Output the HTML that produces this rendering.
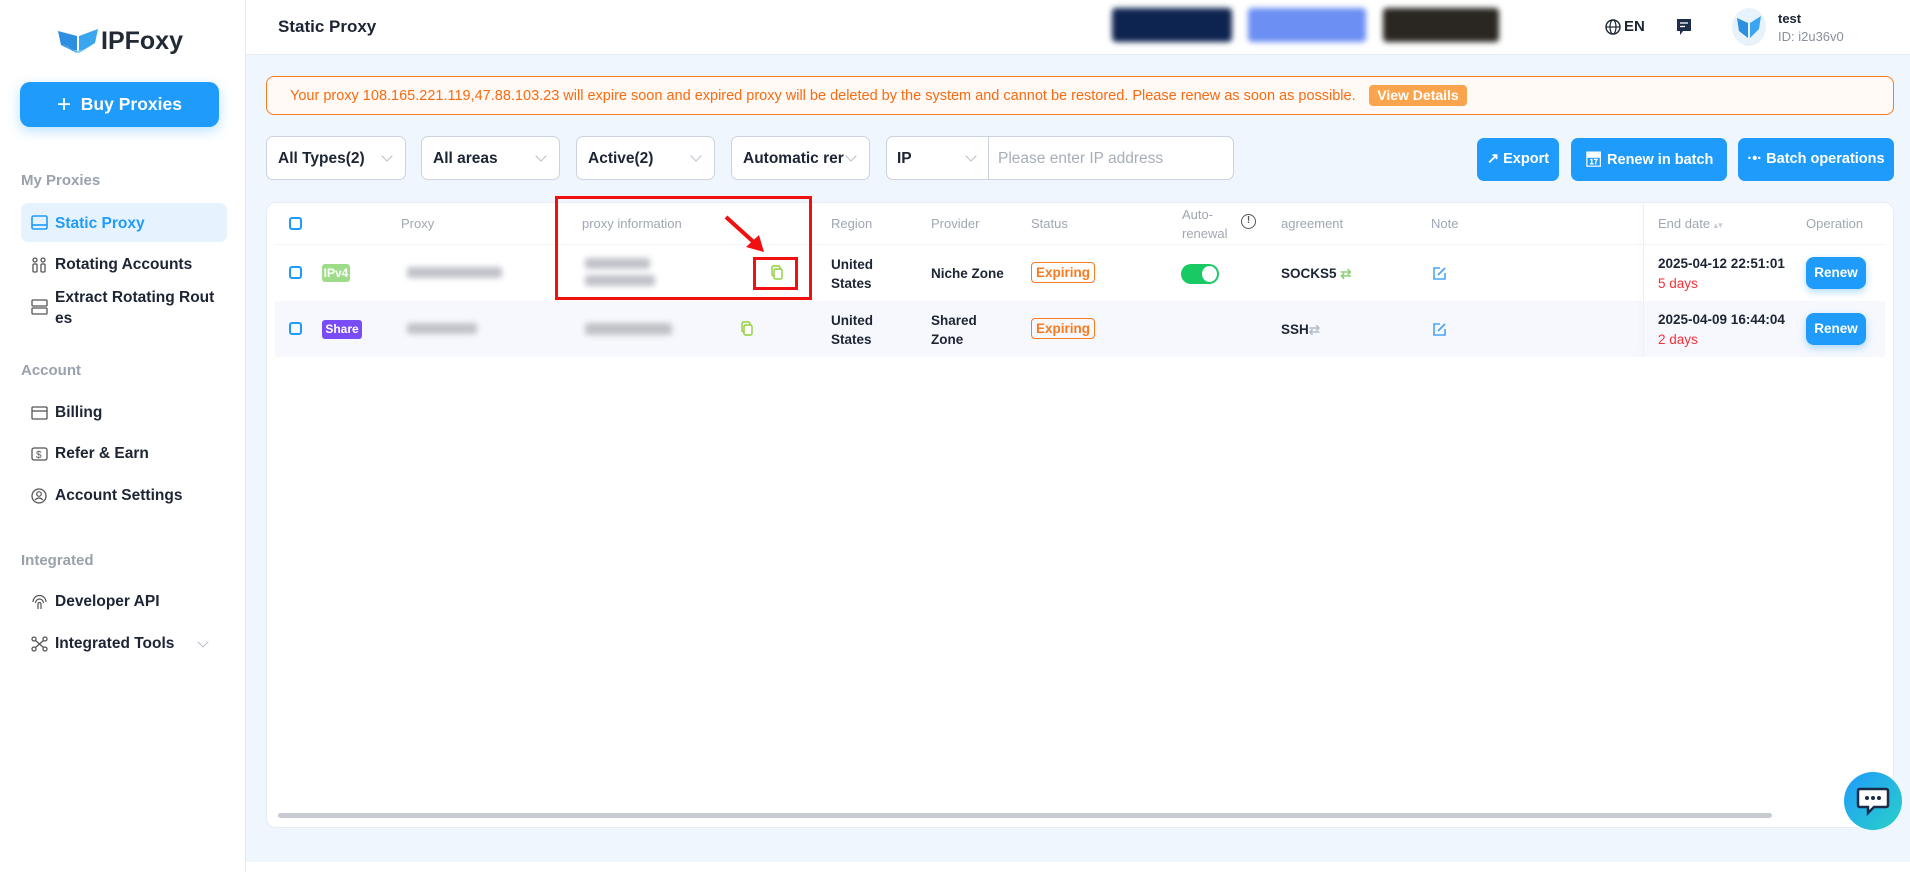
<!DOCTYPE html>
<html><head><meta charset="utf-8"><style>
*{box-sizing:border-box;margin:0;padding:0}
body{width:1910px;height:872px;overflow:hidden;background:#f0f6fe;font-family:"Liberation Sans",sans-serif;color:#1d2433;position:relative}
.a{position:absolute}
.side{left:0;top:0;width:246px;height:872px;background:#fff;border-right:1px solid #e6eaf0}
.nav{position:absolute;left:55px;font-size:15.5px;font-weight:bold;color:#1d2433}
.ico{position:absolute;left:31px}
.sec{position:absolute;left:21px;font-size:15px;font-weight:bold;color:#9aa1ac}
.hdr{left:246px;top:0;width:1664px;height:55px;background:#fff;border-bottom:1px solid #e8edf3}
.sel{position:absolute;top:136px;height:44px;background:#fff;border:1px solid #cdd3dc;border-radius:7px;font-size:15.5px;font-weight:bold;padding:13px 0 0 11px}
.sel:after{content:"";position:absolute;right:14px;top:15px;width:7px;height:7px;border-right:1.5px solid #b8bec8;border-bottom:1.5px solid #b8bec8;transform:rotate(45deg)}
.btn{position:absolute;top:138px;height:43px;background:#1f9bfb;border-radius:7px;color:#fff;font-size:14.5px;font-weight:bold;padding:13px 0 0 0;text-align:center}
.th{position:absolute;top:216px;font-size:13px;color:#a0a7b2}
.td{position:absolute;font-size:13.5px;font-weight:bold;color:#1d2433;line-height:19px}
.cb{position:absolute;left:289px;width:13px;height:13px;border:2px solid #1f9bfb;border-radius:3px}
.blur{position:absolute;background:#bfc2c8;filter:blur(3px);border-radius:3px}
.exp{position:absolute;left:1031px;border:1.5px solid #fa7a1e;color:#fa7a1e;border-radius:4px;font-size:13.5px;font-weight:bold;padding:2px 4px}
.renew{position:absolute;left:1806px;width:60px;height:32px;background:#1f9bfb;border-radius:8px;color:#fff;font-weight:bold;font-size:13.5px;text-align:center;line-height:32px;box-shadow:0 3px 8px rgba(31,155,251,.35)}
</style></head><body>

<div class="a side">
  <svg class="a" style="left:57px;top:27px" width="42" height="28" viewBox="0 0 42 28"><path d="M1 4 L20 9 L20 26 L4 18Z" fill="#2c8fe0"/><path d="M41 2 L22 9 L22 26 L38 16Z" fill="#3aa6f0"/><path d="M6 17 Q21 30 36 17 L21 26Z" fill="#7dd0f4"/></svg>
  <div class="a" style="left:101px;top:27px;font-size:25px;font-weight:bold;color:#222a35">IPFoxy</div>
  <div class="a" style="left:20px;top:82px;width:199px;height:45px;background:#1f9bfb;border-radius:10px;color:#fff;font-size:17.5px;font-weight:bold;text-align:center;line-height:45px;box-shadow:0 4px 12px rgba(31,155,251,.3)"><span style="font-size:24px;font-weight:normal;vertical-align:-2px">+</span>&nbsp; Buy Proxies</div>
  <div class="sec" style="top:172px">My Proxies</div>
  <div class="a" style="left:21px;top:203px;width:206px;height:39px;background:#e6f3fe;border-radius:7px"></div>
  <svg class="ico" style="top:215px" width="17" height="15"><rect x="1" y="1" width="15" height="13" rx="1.5" fill="none" stroke="#1f9bfb" stroke-width="1.6"/><line x1="1" y1="10" x2="16" y2="10" stroke="#1f9bfb" stroke-width="1.6"/></svg>
  <div class="nav" style="top:215px;color:#1f9bfb">Static Proxy</div>
  <svg class="ico" style="top:257px" width="16" height="16"><circle cx="4" cy="3" r="2" fill="none" stroke="#555" stroke-width="1.3"/><circle cx="12" cy="3" r="2" fill="none" stroke="#555" stroke-width="1.3"/><rect x="2" y="7" width="4" height="8" rx="1" fill="none" stroke="#555" stroke-width="1.3"/><rect x="10" y="7" width="4" height="8" rx="1" fill="none" stroke="#555" stroke-width="1.3"/></svg>
  <div class="nav" style="top:256px">Rotating Accounts</div>
  <svg class="ico" style="top:299px" width="17" height="16"><rect x="1" y="1" width="15" height="6" rx="1" fill="none" stroke="#555" stroke-width="1.3"/><rect x="1" y="9" width="15" height="6" rx="1" fill="none" stroke="#555" stroke-width="1.3"/></svg>
  <div class="nav" style="top:287px;line-height:21px">Extract Rotating Rout<br>es</div>
  <div class="sec" style="top:362px">Account</div>
  <svg class="ico" style="top:406px" width="17" height="14"><rect x="1" y="1" width="15" height="12" rx="1" fill="none" stroke="#555" stroke-width="1.3"/><line x1="1" y1="5" x2="16" y2="5" stroke="#555" stroke-width="1.3"/></svg>
  <div class="nav" style="top:404px">Billing</div>
  <svg class="ico" style="top:447px" width="17" height="14"><rect x="1" y="1" width="15" height="12" rx="2" fill="none" stroke="#555" stroke-width="1.3"/><text x="5" y="11" font-size="10" fill="#555" font-family="Liberation Sans">$</text></svg>
  <div class="nav" style="top:445px">Refer &amp; Earn</div>
  <svg class="ico" style="top:488px" width="16" height="16"><circle cx="8" cy="8" r="7" fill="none" stroke="#555" stroke-width="1.3"/><circle cx="8" cy="6" r="2.3" fill="none" stroke="#555" stroke-width="1.2"/><path d="M4 12 Q8 8 12 12" fill="none" stroke="#555" stroke-width="1.2"/></svg>
  <div class="nav" style="top:487px">Account Settings</div>
  <div class="sec" style="top:552px">Integrated</div>
  <svg class="ico" style="top:594px" width="17" height="16"><path d="M2 8 A6.5 6.5 0 0 1 15 8 M4.5 9 A4 4 0 0 1 12.5 9 M7 15 V10 A1.5 1.5 0 0 1 10 10 V15" fill="none" stroke="#555" stroke-width="1.2"/></svg>
  <div class="nav" style="top:593px">Developer API</div>
  <svg class="ico" style="top:636px" width="17" height="16"><circle cx="3" cy="3" r="2" fill="none" stroke="#555" stroke-width="1.3"/><circle cx="14" cy="3" r="2" fill="none" stroke="#555" stroke-width="1.3"/><circle cx="3" cy="13" r="2" fill="none" stroke="#555" stroke-width="1.3"/><circle cx="14" cy="13" r="2" fill="none" stroke="#555" stroke-width="1.3"/><path d="M4.5 4.5 L12.5 11.5 M12.5 4.5 L4.5 11.5" stroke="#555" stroke-width="1.3"/></svg>
  <div class="nav" style="top:635px">Integrated Tools</div>
  <div class="a" style="left:199px;top:638px;width:8px;height:8px;border-right:1.5px solid #b8bec8;border-bottom:1.5px solid #b8bec8;transform:rotate(45deg)"></div>
</div>

<div class="a hdr">
  <div class="a" style="left:32px;top:17px;font-size:17px;font-weight:bold">Static Proxy</div>
  <div class="a" style="left:866px;top:8px;width:120px;height:34px;background:#0e2450;filter:blur(3px);border-radius:4px"></div>
  <div class="a" style="left:1002px;top:8px;width:118px;height:34px;background:#6b8ff3;filter:blur(3px);border-radius:4px"></div>
  <div class="a" style="left:1137px;top:8px;width:116px;height:34px;background:#2a2622;filter:blur(3px);border-radius:4px"></div>
  <svg class="a" style="left:1359px;top:19px" width="16" height="16"><circle cx="8" cy="8" r="7" fill="none" stroke="#1d2433" stroke-width="1.4"/><ellipse cx="8" cy="8" rx="3" ry="7" fill="none" stroke="#1d2433" stroke-width="1.2"/><line x1="1" y1="8" x2="15" y2="8" stroke="#1d2433" stroke-width="1.2"/></svg>
  <div class="a" style="left:1378px;top:18px;font-size:15px;font-weight:bold">EN</div>
  <svg class="a" style="left:1430px;top:18px" width="16" height="18"><path d="M1 1 H15 V13 H7 L4 17 V13 H1Z" fill="#1d2e4a"/><line x1="4" y1="5" x2="12" y2="5" stroke="#fff" stroke-width="1.3"/><line x1="4" y1="8.5" x2="9" y2="8.5" stroke="#fff" stroke-width="1.3"/></svg>
  <div class="a" style="left:1486px;top:8px;width:34px;height:38px;border-radius:50%;background:#e8f2fb"></div>
  <svg class="a" style="left:1490px;top:14px" width="26" height="28"><path d="M1 4 L12 9 L12 24 L3 17Z" fill="#2c8fe0"/><path d="M25 2 L14 9 L14 24 L23 15Z" fill="#3aa6f0"/></svg>
  <div class="a" style="left:1532px;top:11px;font-size:13px;font-weight:bold">test</div>
  <div class="a" style="left:1532px;top:29px;font-size:13px;color:#8a919c">ID: i2u36v0</div>
</div>

<div class="a" style="left:266px;top:76px;width:1628px;height:39px;background:#fffaf6;border:1.5px solid #fa7a1e;border-radius:8px"></div>
<div class="a" style="left:290px;top:88px;font-size:14.5px;color:#fa6a10">Your proxy 108.165.221.119,47.88.103.23 will expire soon and expired proxy will be deleted by the system and cannot be restored. Please renew as soon as possible.</div>
<div class="a" style="left:1369px;top:85px;width:98px;height:21px;background:#fba44e;border-radius:4px;color:#fff;font-size:14px;font-weight:bold;text-align:center;line-height:21px">View Details</div>

<div class="sel" style="left:266px;width:140px">All Types(2)</div>
<div class="sel" style="left:421px;width:139px">All areas</div>
<div class="sel" style="left:576px;width:139px">Active(2)</div>
<div class="sel" style="left:731px;width:139px">Automatic rer</div>
<div class="a" style="left:886px;top:136px;width:348px;height:44px;background:#fff;border:1px solid #cdd3dc;border-radius:7px"></div>
<div class="sel" style="left:886px;width:103px;border:none;background:transparent;top:137px">IP</div>
<div class="a" style="left:988px;top:137px;width:1px;height:42px;background:#cdd3dc"></div>
<div class="a" style="left:998px;top:150px;font-size:15.5px;color:#a8aeb8">Please enter IP address</div>

<div class="btn" style="left:1477px;width:82px">&#x2197; Export</div>
<div class="btn" style="left:1571px;width:156px">&#x1F4C5;&#xFE0E; Renew in batch</div>
<div class="btn" style="left:1738px;width:156px">·•· Batch operations</div>

<div class="a" style="left:266px;top:202px;width:1628px;height:626px;background:#fff;border-radius:10px;border:1px solid #e8edf3"></div>
<div class="a" style="left:275px;top:244px;width:1610px;height:1px;background:#f0f3f8"></div>
<div class="a" style="left:275px;top:301px;width:1610px;height:56px;background:#f6f8fd"></div>
<div class="a" style="left:1643px;top:203px;width:1px;height:154px;background:#eceff4;box-shadow:-3px 0 6px rgba(0,0,0,.06)"></div>

<div class="cb" style="top:217px"></div>
<div class="th" style="left:401px">Proxy</div>
<div class="th" style="left:582px">proxy information</div>
<div class="th" style="left:831px">Region</div>
<div class="th" style="left:931px">Provider</div>
<div class="th" style="left:1031px">Status</div>
<div class="th" style="left:1182px;top:205px;line-height:19px">Auto-<br>renewal</div>
<div class="a" style="left:1241px;top:214px;width:15px;height:15px;border:1.5px solid #555;border-radius:50%;font-size:10px;font-weight:bold;text-align:center;line-height:12px;color:#555">!</div>
<div class="th" style="left:1281px">agreement</div>
<div class="th" style="left:1431px">Note</div>
<div class="th" style="left:1658px">End date <span style="font-size:9px;color:#c8cdd4">&#x25B4;&#x25BE;</span></div>
<div class="th" style="left:1806px">Operation</div>

<div class="cb" style="top:266px"></div>
<div class="a" style="left:322px;top:264px;width:28px;height:18px;background:#9edc8a;border-radius:3px;color:#fff;font-size:12px;font-weight:bold;text-align:center;line-height:18px">IPv4</div>
<div class="blur" style="left:407px;top:267px;width:95px;height:11px"></div>
<div class="blur" style="left:585px;top:258px;width:65px;height:11px"></div>
<div class="blur" style="left:585px;top:275px;width:70px;height:11px"></div>
<svg class="a" style="left:771px;top:265px" width="12" height="15"><rect x="1" y="1" width="8" height="10" rx="1.5" fill="none" stroke="#8fd03a" stroke-width="1.4"/><rect x="3" y="4" width="8" height="10" rx="1.5" fill="#fff" stroke="#8fd03a" stroke-width="1.4"/></svg>
<div class="td" style="left:831px;top:255px">United<br>States</div>
<div class="td" style="left:931px;top:264px">Niche Zone</div>
<div class="exp" style="top:262px">Expiring</div>
<div class="a" style="left:1181px;top:264px;width:38px;height:20px;background:#18c964;border-radius:10px"></div>
<div class="a" style="left:1202px;top:266px;width:15px;height:16px;background:#fff;border-radius:50%"></div>
<div class="td" style="left:1281px;top:264px">SOCKS5 <span style="color:#8fd07a">&#x21C4;</span></div>
<svg class="a" style="left:1432px;top:266px" width="15" height="15"><path d="M8 2 H2 V13 H13 V7" fill="none" stroke="#4aa6f5" stroke-width="1.6"/><path d="M6 9 L13 2" stroke="#4aa6f5" stroke-width="1.8"/></svg>
<div class="td" style="left:1658px;top:254px">2025-04-12 22:51:01</div>
<div class="td" style="left:1658px;top:274px;color:#f5303a;font-weight:normal">5 days</div>
<div class="renew" style="top:257px">Renew</div>

<div class="cb" style="top:322px"></div>
<div class="a" style="left:322px;top:320px;width:40px;height:19px;background:#7a4cf5;border-radius:3px;color:#fff;font-size:12px;font-weight:bold;text-align:center;line-height:19px">Share</div>
<div class="blur" style="left:407px;top:323px;width:70px;height:11px"></div>
<div class="blur" style="left:585px;top:323px;width:87px;height:12px"></div>
<svg class="a" style="left:741px;top:321px" width="12" height="15"><rect x="1" y="1" width="8" height="10" rx="1.5" fill="none" stroke="#8fd03a" stroke-width="1.4"/><rect x="3" y="4" width="8" height="10" rx="1.5" fill="#fff" stroke="#8fd03a" stroke-width="1.4"/></svg>
<div class="td" style="left:831px;top:311px">United<br>States</div>
<div class="td" style="left:931px;top:311px">Shared<br>Zone</div>
<div class="exp" style="top:318px">Expiring</div>
<div class="td" style="left:1281px;top:320px">SSH<span style="color:#b8bec8">&#x21C4;</span></div>
<svg class="a" style="left:1432px;top:322px" width="15" height="15"><path d="M8 2 H2 V13 H13 V7" fill="none" stroke="#4aa6f5" stroke-width="1.6"/><path d="M6 9 L13 2" stroke="#4aa6f5" stroke-width="1.8"/></svg>
<div class="td" style="left:1658px;top:310px">2025-04-09 16:44:04</div>
<div class="td" style="left:1658px;top:330px;color:#f5303a;font-weight:normal">2 days</div>
<div class="renew" style="top:313px">Renew</div>

<div class="a" style="left:555px;top:196px;width:257px;height:104px;border:3px solid #f01010"></div>
<div class="a" style="left:753px;top:257px;width:45px;height:33px;border:3px solid #f01010"></div>
<svg class="a" style="left:720px;top:212px" width="50" height="45"><line x1="6" y1="5" x2="38" y2="34" stroke="#f01010" stroke-width="4"/><path d="M44 40 L26 35 L39 23Z" fill="#f01010"/></svg>

<div class="a" style="left:278px;top:813px;width:1494px;height:5px;background:#c8ccd2;border-radius:3px"></div>
<div class="a" style="left:1844px;top:772px;width:58px;height:58px;border-radius:50%;background:linear-gradient(135deg,#1f9bfb,#2ad0c8)"></div>
<svg class="a" style="left:1856px;top:786px" width="34" height="30"><path d="M4 3 H30 Q32 3 32 5 V19 Q32 21 30 21 H18 L12 27 V21 H4 Q2 21 2 19 V5 Q2 3 4 3Z" fill="#fff" stroke="#1a2c4a" stroke-width="2.5"/><circle cx="11" cy="12" r="2" fill="#1a2c4a"/><circle cx="17" cy="12" r="2" fill="#1a2c4a"/><circle cx="23" cy="12" r="2" fill="#1a2c4a"/></svg>
<div class="a" style="left:246px;top:862px;width:1664px;height:10px;background:#fff"></div>
</body></html>
